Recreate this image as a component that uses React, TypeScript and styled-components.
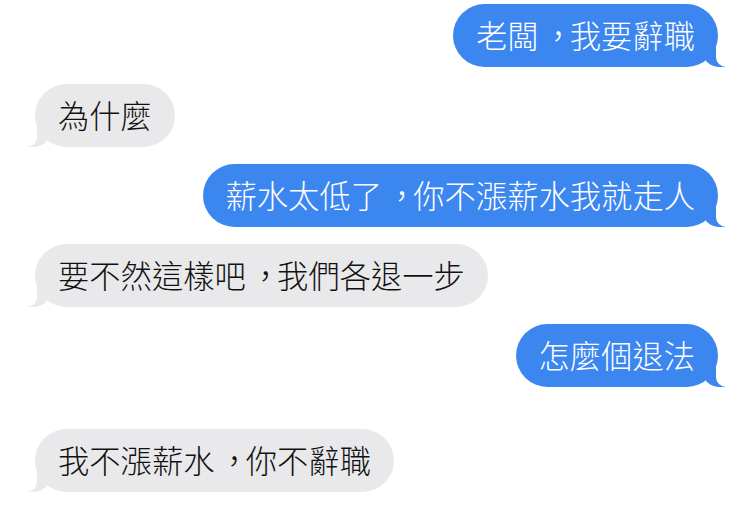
import React from "react";
import styled, { createGlobalStyle, css } from "styled-components";

const Global = createGlobalStyle`
  html, body { margin: 0; padding: 0; background: #ffffff; }
  body { font-family: "Noto Sans CJK TC", "Noto Sans", sans-serif; }
`;

const Thread = styled.div`
  width: 750px;
  height: 513px;
  box-sizing: border-box;
  padding: 4px 32px 0 35px;
  display: flex;
  flex-direction: column;
  gap: 17px;
  overflow: hidden;
`;

type Side = "me" | "them";

const Bubble = styled.div<{ $side: Side; $gapBefore?: number }>`
  position: relative;
  box-sizing: border-box;
  height: 63px;
  padding: 0 23px;
  display: flex;
  align-items: center;
  border-radius: 32px;
  font-family: "Noto Sans CJK TC", sans-serif;
  font-size: 31.3px;
  font-weight: 300;
  line-height: 1;
  white-space: nowrap;
  text-spacing-trim: space-all;
  margin-top: ${(p) => (p.$gapBefore ? `${p.$gapBefore}px` : "0")};
  ${(p) =>
    p.$side === "me"
      ? css`
          align-self: flex-end;
          background: #3c86f0;
          color: #ffffff;
          &::before {
            content: "";
            position: absolute;
            bottom: 0;
            right: -8px;
            height: 20px;
            border-right: 24px solid #3c86f0;
            border-bottom-left-radius: 18px 16px;
          }
          &::after {
            content: "";
            position: absolute;
            bottom: 0;
            right: -10px;
            width: 12px;
            height: 20px;
            background: #ffffff;
            border-bottom-left-radius: 10px;
          }
        `
      : css`
          align-self: flex-start;
          background: #e9e9eb;
          color: #111111;
          &::before {
            content: "";
            position: absolute;
            bottom: 0;
            left: -8px;
            height: 20px;
            border-left: 24px solid #e9e9eb;
            border-bottom-right-radius: 18px 16px;
          }
          &::after {
            content: "";
            position: absolute;
            bottom: 0;
            left: -10px;
            width: 12px;
            height: 20px;
            background: #ffffff;
            border-bottom-right-radius: 10px;
          }
        `}
`;

const Text = styled.span`
  position: relative;
  z-index: 1;
  top: -1px;
`;

/* full-width comma moved toward the centre of its cell, keeping a 1em box */
const Comma = styled.span`
  padding-left: 0.13em;
  letter-spacing: -0.13em;
`;

const renderText = (t: string) =>
  t.split("，").map((part, i, arr) => (
    <React.Fragment key={i}>
      {part}
      {i < arr.length - 1 && <Comma>，</Comma>}
    </React.Fragment>
  ));

const messages: { side: Side; text: string; gap?: number }[] = [
  { side: "me", text: "老闆，我要辭職" },
  { side: "them", text: "為什麼" },
  { side: "me", text: "薪水太低了，你不漲薪水我就走人" },
  { side: "them", text: "要不然這樣吧，我們各退一步" },
  { side: "me", text: "怎麼個退法" },
  { side: "them", text: "我不漲薪水，你不辭職", gap: 25 },
];

export default function App() {
  return (
    <>
      <Global />
      <Thread lang="zh-TW">
        {messages.map((m, i) => (
          <Bubble key={i} $side={m.side} $gapBefore={m.gap}>
            <Text>{renderText(m.text)}</Text>
          </Bubble>
        ))}
      </Thread>
    </>
  );
}
